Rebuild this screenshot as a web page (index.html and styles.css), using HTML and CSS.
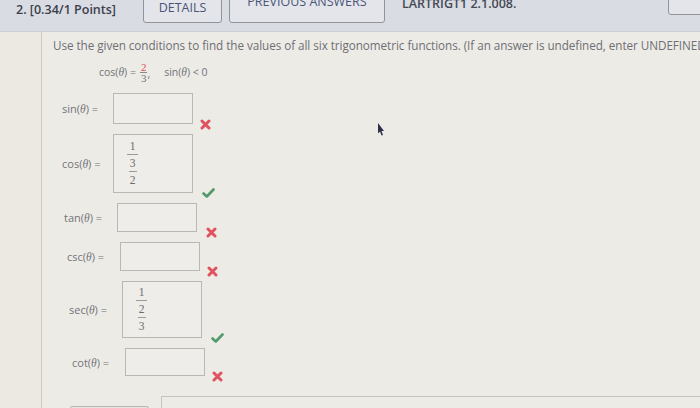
FILE: index.html
```html
<!DOCTYPE html>
<html>
<head>
<meta charset="utf-8">
<link rel="stylesheet" href="styles.css">
</head>
<body>
<div class="page">
  <header class="bar">
    <span class="points">2. [0.34/1 Points]</span>
    <span class="btn btn-details">DETAILS</span>
    <span class="btn btn-prev">PREVIOUS ANSWERS</span>
    <span class="code">LARTRIGT1 2.1.008.</span>
    <span class="btn btn-more">MY</span>
  </header>
  <main class="content">
    <p class="question">Use the given conditions to find the values of all six trigonometric functions. (If an answer is undefined, enter UNDEFINED.)</p>
    <div class="given">
      <span>cos(<i>θ</i>) =</span>
      <span class="frac small"><span class="num red">2</span><span class="den">3</span></span><span class="comma">,</span>
      <span class="cond">sin(<i>θ</i>) &lt; 0</span>
    </div>
    <div class="rows">
      <div class="row r1">
        <span class="label">sin(<i>θ</i>) =</span>
        <span class="box h30"></span>
        <span class="mark x"><svg width="11" height="11" viewBox="0 0 11 11"><path d="M2 2 L9 9 M9 2 L2 9" stroke="#e0525e" stroke-width="3" stroke-linecap="round"/></svg></span>
      </div>
      <div class="row r2">
        <span class="label">cos(<i>θ</i>) =</span>
        <span class="box h59">
          <span class="nest">
            <span class="n1">1</span>
            <span class="line"></span>
            <span class="n1">3</span>
            <span class="line short"></span>
            <span class="n1">2</span>
          </span>
        </span>
        <span class="mark ok">
          <svg width="13" height="10" viewBox="0 0 13 10"><path d="M1.5 5.5 L4.8 8.5 L11.5 1.5" fill="none" stroke="#4f9a6c" stroke-width="2.6" stroke-linecap="round" stroke-linejoin="round"/></svg>
        </span>
      </div>
      <div class="row r3">
        <span class="label">tan(<i>θ</i>) =</span>
        <span class="box h29"></span>
        <span class="mark x"><svg width="11" height="11" viewBox="0 0 11 11"><path d="M2 2 L9 9 M9 2 L2 9" stroke="#e0525e" stroke-width="3" stroke-linecap="round"/></svg></span>
      </div>
      <div class="row r4">
        <span class="label">csc(<i>θ</i>) =</span>
        <span class="box h29"></span>
        <span class="mark x"><svg width="11" height="11" viewBox="0 0 11 11"><path d="M2 2 L9 9 M9 2 L2 9" stroke="#e0525e" stroke-width="3" stroke-linecap="round"/></svg></span>
      </div>
      <div class="row r5">
        <span class="label">sec(<i>θ</i>) =</span>
        <span class="box h57">
          <span class="nest">
            <span class="n1">1</span>
            <span class="line"></span>
            <span class="n1">2</span>
            <span class="line short"></span>
            <span class="n1">3</span>
          </span>
        </span>
        <span class="mark ok">
          <svg width="13" height="10" viewBox="0 0 13 10"><path d="M1.5 5.5 L4.8 8.5 L11.5 1.5" fill="none" stroke="#4f9a6c" stroke-width="2.6" stroke-linecap="round" stroke-linejoin="round"/></svg>
        </span>
      </div>
      <div class="row r6">
        <span class="label">cot(<i>θ</i>) =</span>
        <span class="box h28"></span>
        <span class="mark x"><svg width="11" height="11" viewBox="0 0 11 11"><path d="M2 2 L9 9 M9 2 L2 9" stroke="#e0525e" stroke-width="3" stroke-linecap="round"/></svg></span>
      </div>
    </div>
    <div class="bottom">
      <span class="bbtn"></span>
      <span class="bpanel"></span>
    </div>
  </main>
  <svg class="cursor" width="10" height="14" viewBox="0 0 10 14"><path d="M2 1 L8 9 L5.5 9 L7 13 L5.5 13.5 L4 9.5 L2 11.5 Z" fill="#2d2f4a"/></svg>
</div>
</body>
</html>
```

FILE: styles.css
```css
html, body {
  margin: 0;
  padding: 0;
}
body {
  width: 700px;
  height: 408px;
  overflow: hidden;
  background: #ece9e3;
  font-family: "Open Sans", "DejaVu Sans", sans-serif;
  color: #6e7076;
}
.page {
  position: relative;
  width: 700px;
  height: 408px;
  overflow: hidden;
}
.bar {
  height: 32px;
  background: #d9dce2;
  display: flex;
  align-items: flex-start;
  position: relative;
  border-bottom: 1px solid #cdd0d6;
  box-sizing: border-box;
}
.points {
  margin: 2px 0 0 16px;
  font-size: 12.5px;
  font-weight: 600;
  color: #3b404b;
  line-height: 16px;
  width: 127px;
}
.btn {
  display: flex;
  align-items: flex-end;
  justify-content: center;
  box-sizing: border-box;
  height: 31px;
  margin-top: -8px;
  border: 1px solid #8f939c;
  border-radius: 3px;
  background: #e3e5ea;
  color: #4a5477;
  font-size: 12.5px;
  line-height: 16px;
  padding-bottom: 6px;
}
.btn-details {
  width: 79px;
}
.btn-prev {
  width: 156px;
  margin-left: 7px;
  padding-bottom: 12px;
  height: 31px;
}
.code {
  margin: -4px 0 0 17px;
  font-size: 12.5px;
  font-weight: 600;
  color: #444955;
  line-height: 16px;
}
.btn-more {
  position: absolute;
  left: 668px;
  top: 0;
  width: 60px;
  height: 23px;
  padding-bottom: 11px;
  justify-content: flex-start;
  padding-left: 10px;
}
.content {
  margin-left: 41px;
  border-left: 1px solid #cfcbc4;
  padding: 5px 0 0 11px;
  height: 376px;
  background: #edebe6;
}
.question {
  margin: 0;
  font-size: 11.7px;
  line-height: 16px;
  white-space: nowrap;
  letter-spacing: -0.05px;
  color: #6d6f75;
}
.given {
  display: flex;
  align-items: center;
  margin: 9px 0 0 46px;
  font-size: 10.5px;
  color: #72747a;
  height: 20px;
}
.given i, .label i {
  font-family: "Liberation Serif", serif;
  font-size: 11.5px;
}
.frac {
  display: inline-flex;
  flex-direction: column;
  align-items: center;
  font-family: "Liberation Serif", serif;
  margin-left: 4px;
  line-height: 10px;
  font-size: 11px;
}
.frac .num {
  border-bottom: 1px solid #8a8a8a;
  padding: 0 1px;
}
.red {
  color: #d9534f;
}
.comma {
  align-self: flex-end;
  margin-bottom: 1px;
}
.cond {
  margin-left: 14px;
}
.rows {
  display: flex;
  flex-direction: column;
  gap: 10px;
  margin-top: 11px;
}
.row {
  display: flex;
  align-items: center;
  font-size: 11px;
  color: #727479;
}
.r1 { padding-left: 9px; }
.r2 { padding-left: 9px; }
.r3 { padding-left: 11px; }
.r4 { padding-left: 14px; }
.r5 { padding-left: 16px; }
.r6 { padding-left: 19px; }
.label {
  width: 51px;
  white-space: nowrap;
}
.r3 .label, .r4 .label, .r5 .label, .r6 .label {
  width: 53px;
}
.box {
  box-sizing: border-box;
  width: 80px;
  border: 1px solid #b9b8b4;
  background: #efede9;
  display: flex;
  align-items: center;
}
.h30 { height: 31px; }
.h59 { height: 59px; }
.h29 { height: 29px; }
.h57 { height: 57px; }
.h28 { height: 28px; }
.nest {
  display: flex;
  flex-direction: column;
  align-items: center;
  margin-left: 13px;
  font-family: "Liberation Serif", serif;
  font-size: 11.5px;
  color: #6b6b6b;
  line-height: 13px;
}
.line {
  width: 11px;
  height: 1px;
  background: #9a9a9a;
  margin: 1px 0 2px;
}
.line.short {
  width: 8px;
}
.mark {
  align-self: flex-end;
  margin-bottom: -6px;
  margin-left: 7px;
  height: 12px;
  display: flex;
  align-items: center;
}
.r2 .mark, .r3 .mark, .r5 .mark {
  margin-left: 9px;
}
.bottom {
  display: flex;
  align-items: flex-start;
  margin-top: 20px;
  margin-left: 17px;
}
.bbtn {
  width: 77px;
  height: 20px;
  margin-top: 10px;
  border: 1px solid #b9b8b4;
  border-radius: 2px;
  background: #e6e4df;
}
.bpanel {
  flex: 1;
  height: 30px;
  margin-left: 12px;
  border-top: 1px solid #c6c4bf;
  border-left: 1px solid #c6c4bf;
}
.cursor {
  position: absolute;
  left: 376px;
  top: 122px;
}
```
